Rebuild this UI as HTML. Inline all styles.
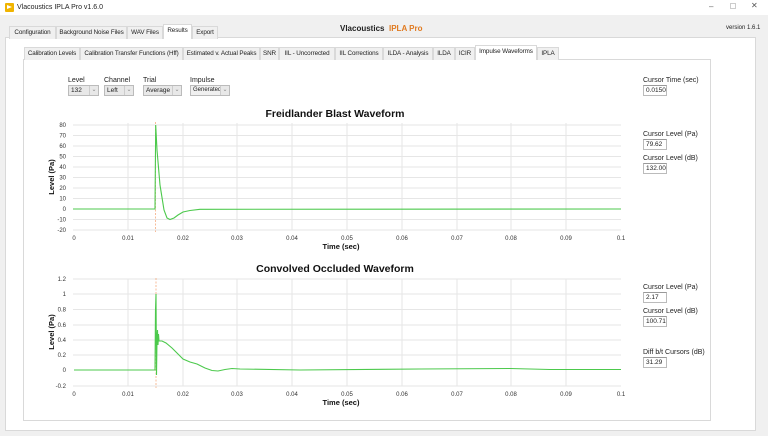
<!DOCTYPE html>
<html><head><meta charset="utf-8"><style>
*{margin:0;padding:0;box-sizing:border-box}
body{width:768px;height:436px;background:#f0f0f0;font-family:"Liberation Sans",sans-serif;position:relative;overflow:hidden;font-size:7px;color:#222}
.a{position:absolute;white-space:nowrap}
.tab{position:absolute;height:13px;border:1px solid #d9d9d9;border-bottom:none;background:#f0f0f0;font-size:6.3px;line-height:12px;padding:0;text-align:center;white-space:nowrap;overflow:hidden;letter-spacing:-0.1px}
.tab.s{background:#fff;height:15px}
.box{position:absolute;height:11px;border:1px solid #bbb;border-top-color:#999;background:#fff;font-size:6.5px;line-height:9px;padding-left:2px}
.sel{position:absolute;height:11px;border:1px solid #bbb;background:#e8e8e8;font-size:6.5px;line-height:9px;padding-left:2px;white-space:nowrap;overflow:hidden}
.sel i{position:absolute;right:0;top:0;width:9px;height:9px;border-left:1px solid #ccc;font-style:normal;color:#888;font-size:6px;text-align:center;background:#e8e8e8}
</style></head><body>
<div class="a" style="left:0;top:0;width:768px;height:15px;background:#fff"></div>
<div class="a" style="left:5px;top:3px;width:9px;height:9px;background:#f0b400;border-radius:1px"></div>
<div class="a" style="left:7px;top:5px;width:0;height:0;border-left:5px solid #fff;border-top:2.5px solid transparent;border-bottom:2.5px solid transparent"></div>
<div class="a" style="left:17px;top:4px;font-size:7px">Vlacoustics IPLA Pro v1.6.0</div>
<div class="a" style="left:709px;top:2px;color:#666;font-size:8px">–</div>
<div class="a" style="left:730px;top:3px;width:6px;height:6px;border:1px solid #ccc"></div>
<div class="a" style="left:751px;top:1px;color:#555;font-size:8px">✕</div>
<div class="a" style="left:340px;top:24px;font-size:8px;font-weight:bold">Vlacoustics</div>
<div class="a" style="left:389px;top:24px;font-size:8px;font-weight:bold;color:#e07a20">IPLA Pro</div>
<div class="a" style="left:726px;top:25px;font-size:6px">version 1.6.1</div>
<div class="a" style="left:5px;top:37px;width:751px;height:394px;background:#fff;border:1px solid #d9d9d9"></div>
<div class="tab" style="left:9px;top:26px;width:47px">Configuration</div>
<div class="tab" style="left:56px;top:26px;width:71px">Background Noise Files</div>
<div class="tab" style="left:127px;top:26px;width:36px">WAV Files</div>
<div class="tab s" style="left:163px;top:24px;width:29px">Results</div>
<div class="tab" style="left:192px;top:26px;width:26px">Export</div>
<div class="a" style="left:23px;top:59px;width:688px;height:362px;background:#fff;border:1px solid #d9d9d9"></div>
<div class="tab" style="left:24px;top:47px;width:56px">Calibration Levels</div>
<div class="tab" style="left:80px;top:47px;width:103px">Calibration Transfer Functions (Hff)</div>
<div class="tab" style="left:183px;top:47px;width:77px">Estimated v. Actual Peaks</div>
<div class="tab" style="left:260px;top:47px;width:19px">SNR</div>
<div class="tab" style="left:279px;top:47px;width:56px">IIL - Uncorrected</div>
<div class="tab" style="left:335px;top:47px;width:48px">IIL Corrections</div>
<div class="tab" style="left:383px;top:47px;width:50px">ILDA - Analysis</div>
<div class="tab" style="left:433px;top:47px;width:22px">ILDA</div>
<div class="tab" style="left:455px;top:47px;width:20px">ICIR</div>
<div class="tab s" style="left:475px;top:45px;width:62px">Impulse Waveforms</div>
<div class="tab" style="left:537px;top:47px;width:22px">IPLA</div>
<div class="a" style="left:68px;top:77px">Level</div>
<div class="sel" style="left:68px;top:85px;width:31px">132<i>⌄</i></div>
<div class="a" style="left:104px;top:77px">Channel</div>
<div class="sel" style="left:104px;top:85px;width:30px">Left<i>⌄</i></div>
<div class="a" style="left:143px;top:77px">Trial</div>
<div class="sel" style="left:143px;top:85px;width:39px">Average<i>⌄</i></div>
<div class="a" style="left:190px;top:77px">Impulse</div>
<div class="sel" style="left:190px;top:85px;width:40px;background:#f0f0f0;font-size:6px">Generated<i>⌄</i></div>
<div class="a" style="left:643px;top:77px">Cursor Time (sec)</div>
<div class="box" style="left:643px;top:85px;width:24px">0.0150</div>
<div class="a" style="left:643px;top:131px">Cursor Level (Pa)</div>
<div class="box" style="left:643px;top:139px;width:24px">79.62</div>
<div class="a" style="left:643px;top:155px">Cursor Level (dB)</div>
<div class="box" style="left:643px;top:163px;width:24px">132.00</div>
<div class="a" style="left:643px;top:284px">Cursor Level (Pa)</div>
<div class="box" style="left:643px;top:292px;width:24px">2.17</div>
<div class="a" style="left:643px;top:308px">Cursor Level (dB)</div>
<div class="box" style="left:643px;top:316px;width:24px">100.71</div>
<div class="a" style="left:643px;top:349px">Diff b/t Cursors (dB)</div>
<div class="box" style="left:643px;top:357px;width:24px">31.29</div>
<svg class="a" style="left:0;top:0" width="768" height="436" font-family="Liberation Sans,sans-serif">
<g stroke="#e6e6e6" stroke-width="1">
<line x1="73" y1="125" x2="621" y2="125"/><line x1="73" y1="135.5" x2="621" y2="135.5"/><line x1="73" y1="146" x2="621" y2="146"/><line x1="73" y1="156.5" x2="621" y2="156.5"/><line x1="73" y1="167" x2="621" y2="167"/><line x1="73" y1="177.5" x2="621" y2="177.5"/><line x1="73" y1="188" x2="621" y2="188"/><line x1="73" y1="198.5" x2="621" y2="198.5"/><line x1="73" y1="219.5" x2="621" y2="219.5"/><line x1="73" y1="230" x2="621" y2="230"/>
<line x1="128" y1="123" x2="128" y2="230"/><line x1="183" y1="123" x2="183" y2="230"/><line x1="237" y1="123" x2="237" y2="230"/><line x1="292" y1="123" x2="292" y2="230"/><line x1="347" y1="123" x2="347" y2="230"/><line x1="402" y1="123" x2="402" y2="230"/><line x1="457" y1="123" x2="457" y2="230"/><line x1="511" y1="123" x2="511" y2="230"/><line x1="566" y1="123" x2="566" y2="230"/>
<line x1="73" y1="279" x2="621" y2="279"/><line x1="73" y1="294" x2="621" y2="294"/><line x1="73" y1="309.5" x2="621" y2="309.5"/><line x1="73" y1="325" x2="621" y2="325"/><line x1="73" y1="340" x2="621" y2="340"/><line x1="73" y1="355" x2="621" y2="355"/><line x1="73" y1="386" x2="621" y2="386"/>
<line x1="128" y1="279" x2="128" y2="386"/><line x1="183" y1="279" x2="183" y2="386"/><line x1="237" y1="279" x2="237" y2="386"/><line x1="292" y1="279" x2="292" y2="386"/><line x1="347" y1="279" x2="347" y2="386"/><line x1="402" y1="279" x2="402" y2="386"/><line x1="457" y1="279" x2="457" y2="386"/><line x1="511" y1="279" x2="511" y2="386"/><line x1="566" y1="279" x2="566" y2="386"/>
</g>
<line x1="155.5" y1="122" x2="155.5" y2="232" stroke="#f4a070" stroke-dasharray="2,1.5" stroke-width="0.7"/>
<line x1="156" y1="278" x2="156" y2="388" stroke="#f4a070" stroke-dasharray="2,1.5" stroke-width="0.7"/>
<path d="M73 209 L155 209 L155.7 125 L157 150 L160 185 L164 210 L167 218 L170 219.5 L174 218 L178 215 L183 212 L190 210.5 L200 209.3 L621 209" fill="none" stroke="#4cc94c" stroke-width="1.1"/>
<path d="M74 370 L155 370 L155.5 310 L156 294 L156.5 375 L157 340 L157.5 330 L158 345 L158.5 334 L159 341 L162 341 L166 343 L172 348 L178 354 L183 359 L190 362 L197 364 L205 368 L212 370.5 L218 371 L225 369.5 L232 368.5 L240 369 L300 370 L420 369 L510 368.5 L550 369.5 L621 369.5" fill="none" stroke="#4cc94c" stroke-width="1.1"/>
<g font-size="6" fill="#333" text-anchor="end">
<text x="66" y="127">80</text><text x="66" y="137.5">70</text><text x="66" y="148">60</text><text x="66" y="158.5">50</text><text x="66" y="169">40</text><text x="66" y="179.5">30</text><text x="66" y="190">20</text><text x="66" y="200.5">10</text><text x="66" y="211">0</text><text x="66" y="221.5">-10</text><text x="66" y="232">-20</text>
<text x="66" y="281">1.2</text><text x="66" y="296">1</text><text x="66" y="311.5">0.8</text><text x="66" y="327">0.6</text><text x="66" y="342">0.4</text><text x="66" y="357">0.2</text><text x="66" y="372">0</text><text x="66" y="388">-0.2</text>
</g>
<g font-size="6" fill="#333" text-anchor="middle">
<text x="74" y="240">0</text><text x="128" y="240">0.01</text><text x="183" y="240">0.02</text><text x="237" y="240">0.03</text><text x="292" y="240">0.04</text><text x="347" y="240">0.05</text><text x="402" y="240">0.06</text><text x="457" y="240">0.07</text><text x="511" y="240">0.08</text><text x="566" y="240">0.09</text><text x="621" y="240">0.1</text>
<text x="74" y="396">0</text><text x="128" y="396">0.01</text><text x="183" y="396">0.02</text><text x="237" y="396">0.03</text><text x="292" y="396">0.04</text><text x="347" y="396">0.05</text><text x="402" y="396">0.06</text><text x="457" y="396">0.07</text><text x="511" y="396">0.08</text><text x="566" y="396">0.09</text><text x="621" y="396">0.1</text>
</g>
<g font-weight="bold" fill="#111" text-anchor="middle">
<text x="335" y="117" font-size="10.5">Freidlander Blast Waveform</text>
<text x="335" y="272" font-size="10.5">Convolved Occluded Waveform</text>
<text x="341" y="249" font-size="7.5">Time (sec)</text>
<text x="341" y="405" font-size="7.5">Time (sec)</text>
<text transform="translate(54,177) rotate(-90)" font-size="7.5">Level (Pa)</text>
<text transform="translate(54,332) rotate(-90)" font-size="7.5">Level (Pa)</text>
</g>
</svg>
</body></html>
